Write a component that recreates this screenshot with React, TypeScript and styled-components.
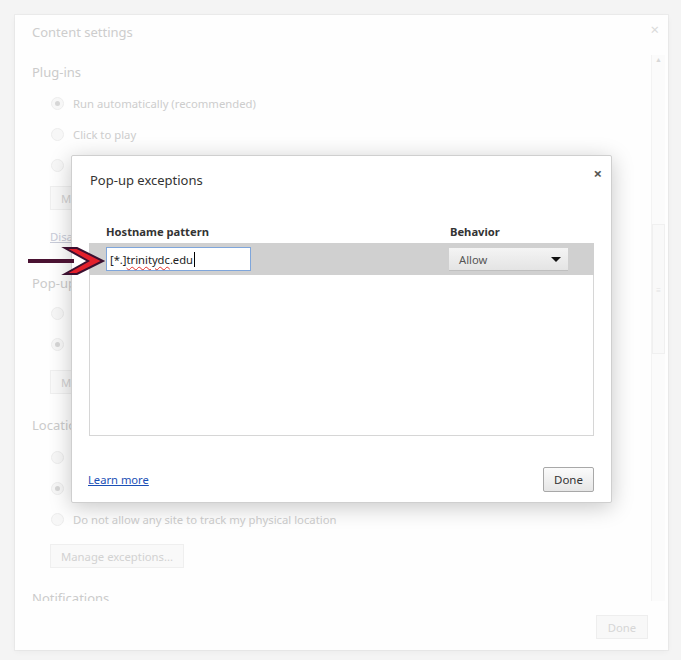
import React from 'react';
import styled, { createGlobalStyle } from 'styled-components';

const GlobalStyle = createGlobalStyle`
  html, body {
    margin: 0;
    padding: 0;
    background: #f4f4f4;
    font-family: "Noto Sans", "Open Sans", sans-serif;
  }
`;

const Page = styled.div`
  position: relative;
  width: 681px;
  height: 660px;
  overflow: hidden;
  padding: 15px 0 0 15px;
  box-sizing: border-box;
`;

/* ---------- faded "Content settings" panel behind the modal ---------- */

const Panel = styled.div`
  width: 653px;
  height: 635px;
  background: #fefefe;
  box-shadow: 0 0 0 1px rgba(0, 0, 0, 0.03), 0 2px 6px rgba(0, 0, 0, 0.04);
  display: flex;
  flex-direction: column;
  color: #cdcdcd;
  font-size: 11.3px;
`;

const PanelHeader = styled.div`
  height: 40px;
  display: flex;
  align-items: flex-start;
  justify-content: space-between;
  padding: 8px 9px 0 17px;
  box-sizing: border-box;
  font-size: 13px;
`;

const FadedClose = styled.span`
  font-size: 15px;
  line-height: 15px;
  color: #dadada;
  margin-top: -1px;
`;

const Body = styled.div`
  flex: 1;
  display: flex;
  overflow: hidden;
  min-height: 0;
`;

const Scroll = styled.div`
  flex: 1;
  padding: 7px 0 0 17px;
  overflow: hidden;
`;

const Track = styled.div`
  width: 13px;
  margin-right: 3px;
  background: #fbfbfb;
  border-left: 1px solid #f3f3f3;
  display: flex;
  flex-direction: column;
  align-items: center;
  color: #d8d8d8;
  font-size: 7px;
`;

const Thumb = styled.div`
  width: 11px;
  height: 128px;
  margin-top: 160px;
  border: 1px solid #f0f0f0;
  background: #f9f9f9;
  display: flex;
  align-items: center;
  justify-content: center;
  color: #e4e4e4;
  font-size: 8px;
`;

const SectionTitle = styled.div<{ $mt: number }>`
  height: 20px;
  line-height: 20px;
  font-size: 13px;
  margin-top: ${(p) => p.$mt}px;
  color: #cbcbcb;
`;

const RadioList = styled.div<{ $mt: number }>`
  margin-top: ${(p) => p.$mt}px;
  padding-left: 19px;
`;

const RadioRow = styled.div`
  height: 31px;
  display: flex;
  align-items: center;
  gap: 9px;
  white-space: nowrap;
`;

const Radio = styled.span<{ $on?: boolean }>`
  width: 13px;
  height: 13px;
  border-radius: 50%;
  border: 1px solid #ededed;
  background: #f7f7f7;
  display: flex;
  align-items: center;
  justify-content: center;
  box-sizing: border-box;
  &::after {
    content: '';
    width: 5px;
    height: 5px;
    border-radius: 50%;
    background: ${(p) => (p.$on ? '#d6d6d6' : 'transparent')};
  }
`;

const FadedButton = styled.div<{ $mt: number }>`
  display: inline-flex;
  align-items: center;
  height: 24px;
  box-sizing: border-box;
  margin: ${(p) => p.$mt}px 0 0 18px;
  padding: 0 10px;
  border: 1px solid #efefef;
  background: #f9f9f9;
  color: #d2d2d2;
`;

const FadedLink = styled.div<{ $mt: number }>`
  margin: ${(p) => p.$mt}px 0 0 18px;
  height: 20px;
  line-height: 20px;
  color: #c8cbd8;
  text-decoration: underline;
`;

const PanelFooter = styled.div`
  height: 49px;
  display: flex;
  justify-content: flex-end;
  align-items: flex-start;
  padding: 14px 20px 0 0;
  box-sizing: border-box;
`;

const FadedDone = styled.div`
  width: 50px;
  height: 22px;
  border: 1px solid #eeeeee;
  background: #f8f8f8;
  color: #d6d6d6;
  display: flex;
  align-items: center;
  justify-content: center;
`;

/* ---------- Pop-up exceptions modal ---------- */

const Modal = styled.div`
  position: absolute;
  left: 71px;
  top: 155px;
  width: 541px;
  height: 348px;
  box-sizing: border-box;
  background: #fff;
  border: 1px solid #cfcfcf;
  border-radius: 2px;
  box-shadow: 0 4px 22px rgba(0, 0, 0, 0.22);
  padding: 0 17px;
  display: flex;
  flex-direction: column;
  color: #333;
  font-size: 11.2px;
`;

const ModalHeader = styled.div`
  height: 48px;
  display: flex;
  justify-content: space-between;
  align-items: center;
  padding-left: 1px;
  font-size: 13px;
  color: #333;
`;

const CloseX = styled.span`
  font-size: 15px;
  font-weight: 700;
  color: #555;
  margin: -15px -8px 0 0;
`;

const ColumnHeads = styled.div`
  display: flex;
  height: 39px;
  align-items: flex-end;
  padding: 0 0 4px 17px;
  box-sizing: border-box;
  font-weight: 700;
  color: #333;
`;

const HeadCell = styled.div<{ $w: number }>`
  width: ${(p) => p.$w}px;
`;

const Table = styled.div`
  height: 193px;
  border: 1px solid #d6d6d6;
  border-top: none;
  box-sizing: border-box;
  display: flex;
  flex-direction: column;
`;

const Row = styled.div`
  height: 32px;
  background: #d0d0d0;
  display: flex;
  align-items: center;
  padding-left: 17px;
  margin: 0 -1px;
`;

const Input = styled.div`
  width: 145px;
  height: 24px;
  box-sizing: border-box;
  border: 1px solid #7fa6db;
  background: #fff;
  display: flex;
  align-items: center;
  padding-left: 3px;
  color: #222;
  margin-right: 198px;
`;

const Misspelled = styled.span`
  text-decoration: underline wavy #e0302a;
  text-decoration-thickness: 1px;
  text-underline-offset: 2px;
`;

const Caret = styled.span`
  width: 1px;
  height: 15px;
  background: #000;
  margin-left: 1px;
`;

const Select = styled.div`
  width: 119px;
  height: 22px;
  box-sizing: border-box;
  background: linear-gradient(#f4f4f4, #e4e4e4);
  box-shadow: 0 1px 0 rgba(0, 0, 0, 0.08);
  display: flex;
  align-items: center;
  justify-content: space-between;
  padding: 0 7px 0 10px;
  color: #555;
`;

const Triangle = styled.span`
  width: 0;
  height: 0;
  border-left: 5px solid transparent;
  border-right: 5px solid transparent;
  border-top: 5px solid #111;
`;

const ModalFooter = styled.div`
  flex: 1;
  display: flex;
  justify-content: space-between;
  align-items: center;
  padding-top: 20px;
`;

const LearnMore = styled.a`
  color: #1a4fb5;
  text-decoration: underline;
  cursor: pointer;
  margin-left: -1px;
`;

const DoneButton = styled.button`
  width: 51px;
  height: 25px;
  border: 1px solid #a8a8a8;
  border-radius: 2px;
  background: linear-gradient(#fbfbfb, #e6e6e6);
  font-family: inherit;
  font-size: 11.5px;
  color: #333;
  padding: 0;
`;

const Arrow = styled.svg`
  position: absolute;
  left: 26px;
  top: 245px;
`;

const sections = {
  plugins: ['Run automatically (recommended)', 'Click to play', 'Block all'],
  popups: [
    'Allow all sites to show pop-ups',
    'Do not allow any site to show pop-ups (recommended)',
  ],
  location: [
    'Allow all sites to track my physical location',
    'Ask when a site tries to track my physical location (recommended)',
    'Do not allow any site to track my physical location',
  ],
};

function Radios({ items, on, mt }: { items: string[]; on: number; mt: number }) {
  return (
    <RadioList $mt={mt}>
      {items.map((label, i) => (
        <RadioRow key={label}>
          <Radio $on={i === on} />
          {label}
        </RadioRow>
      ))}
    </RadioList>
  );
}

export default function App() {
  return (
    <Page>
      <GlobalStyle />
      <Panel>
        <PanelHeader>
          Content settings
          <FadedClose>×</FadedClose>
        </PanelHeader>
        <Body>
          <Scroll>
            <SectionTitle $mt={0}>Plug-ins</SectionTitle>
            <Radios items={sections.plugins} on={0} mt={6} />
            <FadedButton $mt={5}>Manage exceptions...</FadedButton>
            <FadedLink $mt={17}>Disable individual plug-ins...</FadedLink>
            <SectionTitle $mt={26}>Pop-ups</SectionTitle>
            <Radios items={sections.popups} on={1} mt={5} />
            <FadedButton $mt={10}>Manage exceptions...</FadedButton>
            <SectionTitle $mt={21}>Location</SectionTitle>
            <Radios items={sections.location} on={1} mt={7} />
            <FadedButton $mt={9}>Manage exceptions...</FadedButton>
            <SectionTitle $mt={20}>Notifications</SectionTitle>
          </Scroll>
          <Track>
            ▲
            <Thumb>≡</Thumb>
          </Track>
        </Body>
        <PanelFooter>
          <FadedDone>Done</FadedDone>
        </PanelFooter>
      </Panel>

      <Modal>
        <ModalHeader>
          Pop-up exceptions
          <CloseX>×</CloseX>
        </ModalHeader>
        <ColumnHeads>
          <HeadCell $w={344}>Hostname pattern</HeadCell>
          <HeadCell $w={120}>Behavior</HeadCell>
        </ColumnHeads>
        <Table>
          <Row>
            <Input>
              [*.]<Misspelled>trinitydc</Misspelled>.edu
              <Caret />
            </Input>
            <Select>
              Allow
              <Triangle />
            </Select>
          </Row>
        </Table>
        <ModalFooter>
          <LearnMore>Learn more</LearnMore>
          <DoneButton>Done</DoneButton>
        </ModalFooter>
      </Modal>

      <Arrow width="80" height="32" viewBox="0 0 80 32">
        <rect x="2" y="14" width="46" height="4" fill="#4a1232" />
        <polygon
          points="39,3 51,3 77,16 51,29 39,29 62,16"
          fill="#e3202c"
          stroke="#3b1030"
          strokeWidth="2"
          strokeLinejoin="miter"
        />
      </Arrow>
    </Page>
  );
}
